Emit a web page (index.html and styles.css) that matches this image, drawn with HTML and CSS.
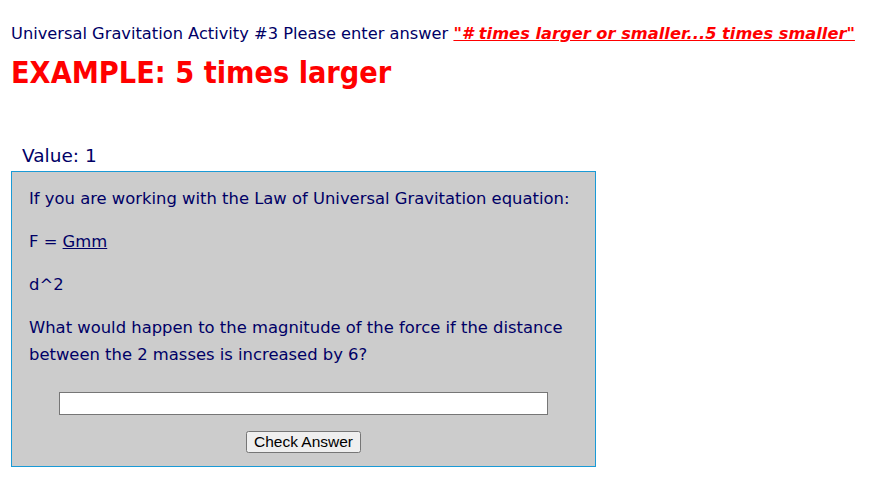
FILE: index.html
```html
<!DOCTYPE html>
<html lang="en">
<head>
  <meta charset="UTF-8" />
  <title>Universal Gravitation Activity #3</title>
  <link rel="stylesheet" href="styles.css">
</head>
<body>
  <div class="page">
    <p class="intro">Universal Gravitation Activity #3 Please enter answer <a href="#" class="format">"# times larger or smaller...5 times smaller"</a></p>
    <h1 class="example">EXAMPLE: 5 times larger</h1>

    <div class="value">Value: 1</div>
    <div class="question">
      <p>If you are working with the Law of Universal Gravitation equation:</p>
      <p>F = <u>Gmm</u></p>
      <p>d^2</p>
      <p>What would happen to the magnitude of the force if the distance between the 2 masses is increased by 6?</p>
      <div class="answer">
        <input type="text" id="answer" />
        <button class="check-btn">Check Answer</button>
      </div>
    </div>
  </div>
</body>
</html>
```

FILE: styles.css
```css
body {
  font-family: 'DejaVu Sans', Verdana, sans-serif;
  color: #000066;
  margin: 0;
  padding: 0;
  background: #fff;
}
.page {
  padding: 24px 11px 0 11px;
}
.intro {
  font-size: 16.25px;
  margin: 0;
}
.format {
  color: #ff0000;
  font-weight: bold;
  font-style: italic;
}
.example {
  color: #ff0000;
  font-family: 'DejaVu Sans Condensed', 'DejaVu Sans', sans-serif;
  font-stretch: condensed;
  font-size: 30.3px;
  margin: 12px 0 0 0;
}
.value {
  font-size: 18.5px;
  margin: 55px 0 5px 11px;
}
.question {
  width: 549px;
  background: #cccccc;
  border: 1px solid #1a9ad6;
  padding: 5px 17px 13px 17px;
  font-size: 16.4px;
  line-height: 27px;
}
.question p {
  margin: 8px 0 16px 0;
}
.answer {
  text-align: center;
  padding-top: 8px;
  line-height: normal;
}
.answer input {
  display: block;
  width: 483px;
  height: 19px;
  margin: 0 auto 16px auto;
  border: 1px solid #767676;
  padding: 1px 2px;
}
.check-btn {
  font-family: 'Liberation Sans', Arial, sans-serif;
  font-size: 15.5px;
  height: 22px;
  padding: 0 6px;
}
```
